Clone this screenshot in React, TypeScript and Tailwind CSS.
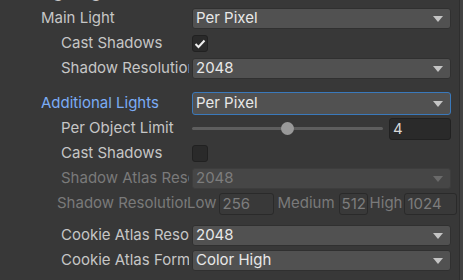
import React from "react";

const Arrow = ({ dim }: { dim?: boolean }) => (
  <svg width="10" height="6" viewBox="0 0 10 6" className="shrink-0">
    <path d="M0 0 H10 L5 6 Z" fill={dim ? "#6a6a6a" : "#c4c4c4"} />
  </svg>
);

const Dropdown = ({
  value,
  focused,
  disabled,
}: {
  value: string;
  focused?: boolean;
  disabled?: boolean;
}) => (
  <div
    className={
      "flex items-center justify-between w-[259px] rounded-[3px] border pl-[3px] pr-[7px] " +
      (focused
        ? "border-[#3a79bb] bg-[#515151] text-[#e8e8e8] h-[23px]"
        : disabled
        ? "border-[#3d3d3d] bg-[#464646] text-[#7d7d7d] h-[21px]"
        : "border-[#303030] bg-[#515151] text-[#e8e8e8] h-[21px]")
    }
  >
    <span>{value}</span>
    <Arrow dim={disabled} />
  </div>
);

const Check = ({ checked }: { checked?: boolean }) => (
  <div className="w-[16px] h-[17px] rounded-[3px] border border-[#212121] bg-[#2a2a2a] flex items-center justify-center">
    {checked && (
      <svg width="12" height="10" viewBox="0 0 12 10">
        <path d="M1.5 5 L4.5 8 L10.5 1.5" stroke="#eeeeee" strokeWidth="2" fill="none" />
      </svg>
    )}
  </div>
);

const Row = ({
  label,
  indent,
  blue,
  dim,
  children,
}: {
  label: string;
  indent?: boolean;
  blue?: boolean;
  dim?: boolean;
  children: React.ReactNode;
}) => (
  <div className="flex items-center h-[25px]">
    <div
      className={
        "w-[148px] mr-[3px] shrink-0 overflow-hidden whitespace-nowrap " +
        (indent ? "pl-[20px] " : "") +
        (blue ? "text-[#7bacf5]" : dim ? "text-[#7a7a7a]" : "text-[#c6c6c6]")
      }
    >
      {label}
    </div>
    {children}
  </div>
);

const SmallField = ({ value, w }: { value: string; w: string }) => (
  <div
    className={
      "h-[22px] rounded-[3px] border border-[#2a2a2a] bg-[#393939] text-[#7d7d7d] pl-[2px] overflow-hidden whitespace-nowrap leading-[20px] shrink-0 " +
      w
    }
  >
    {value}
  </div>
);

export default function App() {
  return (
    <div
      className="w-[463px] h-[280px] bg-[#383838] flex overflow-hidden text-[15px]"
      style={{ fontFamily: "Inter, 'Noto Sans', sans-serif" }}
    >
      <div className="flex-1 pl-[41px]">
        <div className="h-[6px] overflow-hidden">
          <div className="-mt-[18px] text-[#c6c6c6] font-bold">Lighting</div>
        </div>
        <Row label="Main Light">
          <Dropdown value="Per Pixel" />
        </Row>
        <Row label="Cast Shadows" indent>
          <Check checked />
        </Row>
        <Row label="Shadow Resolution" indent>
          <Dropdown value="2048" />
        </Row>
        <div className="h-[10px]" />
        <Row label="Additional Lights" blue>
          <Dropdown value="Per Pixel" focused />
        </Row>
        <Row label="Per Object Limit" indent>
          <div className="flex items-center w-[259px]">
            <div className="relative w-[191px] h-[3px] bg-[#5e5e5e] rounded-full">
              <div className="absolute left-[89px] -top-[5px] w-[13px] h-[13px] rounded-full bg-[#999999]" />
            </div>
            <div className="ml-[6px] h-[22px] w-[62px] rounded-[3px] border border-[#212121] bg-[#2a2a2a] text-[#d8d8d8] pl-[3px] leading-[20px]">
              4
            </div>
          </div>
        </Row>
        <Row label="Cast Shadows" indent>
          <Check />
        </Row>
        <Row label="Shadow Atlas Resolution" indent dim>
          <Dropdown value="2048" disabled />
        </Row>
        <div className="flex items-center h-[25px] text-[#7a7a7a] whitespace-nowrap">
          <div className="w-[146px] shrink-0 overflow-hidden pl-[16px]">Shadow Resolution</div>
          <span className="mr-[3px]">Low</span>
          <SmallField value="256" w="w-[55px]" />
          <span className="ml-[3px] mr-[4px]">Medium</span>
          <SmallField value="512" w="w-[29px]" />
          <span className="ml-[2px] mr-[2px]">High</span>
          <SmallField value="1024" w="w-[53px]" />
        </div>
        <div className="h-[7px]" />
        <Row label="Cookie Atlas Resolution" indent>
          <Dropdown value="2048" />
        </Row>
        <Row label="Cookie Atlas Format" indent>
          <Dropdown value="Color High" />
        </Row>
      </div>
      <div className="w-[4px] border-l border-[#2e2e2e] bg-[#414141]" />
    </div>
  );
}
